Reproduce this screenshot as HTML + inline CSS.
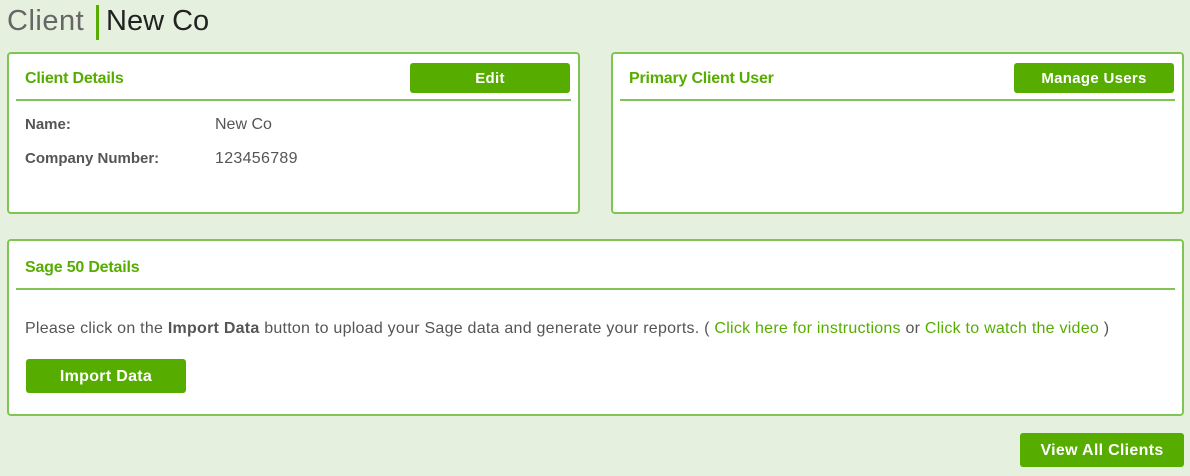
<!DOCTYPE html>
<html><head><style>
body{margin:0;width:1190px;height:476px;background:#e5f1de;font-family:"Liberation Sans",sans-serif;position:relative;overflow:hidden;color:#555}
.a{position:absolute}
.panel{position:absolute;background:#fff;border:2px solid #80c553;border-radius:4px;box-sizing:border-box}
.btn{position:absolute;background:#56ad00;color:#fff;border-radius:3px;font-size:15px;font-weight:bold;text-align:center;letter-spacing:0.3px}
.h{position:absolute;color:#56ad00;font-weight:bold;font-size:16px;letter-spacing:-0.2px}
.line{position:absolute;height:2px;background:#80c553}
a{color:#56ad00;text-decoration:none}
</style></head><body>
<div class="a" style="left:7px;top:5px;font-size:29px;color:#666;letter-spacing:0.5px">Client</div>
<div class="a" style="left:96px;top:5px;width:3px;height:35px;background:#56ad00"></div>
<div class="a" style="left:106px;top:5px;font-size:29px;color:#222">New Co</div>

<div class="panel" style="left:7px;top:52px;width:573px;height:162px"></div>
<div class="h" style="left:25px;top:70px">Client Details</div>
<div class="btn" style="left:410px;top:63px;width:160px;height:30px;line-height:31px">Edit</div>
<div class="line" style="left:16px;top:99px;width:555px"></div>
<div class="a" style="left:25px;top:116px;font-size:15px;font-weight:bold">Name:</div>
<div class="a" style="left:215px;top:116px;font-size:16px">New Co</div>
<div class="a" style="left:25px;top:150px;font-size:15px;font-weight:bold">Company Number:</div>
<div class="a" style="left:215px;top:150px;font-size:16px;letter-spacing:0.3px">123456789</div>

<div class="panel" style="left:611px;top:52px;width:573px;height:162px"></div>
<div class="h" style="left:629px;top:70px">Primary Client User</div>
<div class="btn" style="left:1014px;top:63px;width:160px;height:30px;line-height:31px">Manage Users</div>
<div class="line" style="left:620px;top:99px;width:555px"></div>

<div class="panel" style="left:7px;top:239px;width:1177px;height:177px"></div>
<div class="h" style="left:25px;top:259px">Sage 50 Details</div>
<div class="line" style="left:16px;top:288px;width:1159px"></div>
<div class="a" style="left:25px;top:320px;font-size:16px;white-space:nowrap;letter-spacing:0.25px">Please click on the <b>Import Data</b> button to upload your Sage data and generate your reports. ( <a>Click here for instructions</a> or <a>Click to watch the video</a> )</div>
<div class="btn" style="left:26px;top:359px;width:160px;height:34px;line-height:36px;font-size:16px">Import Data</div>

<div class="btn" style="left:1020px;top:433px;width:164px;height:34px;line-height:36px;font-size:16px">View All Clients</div>
</body></html>
